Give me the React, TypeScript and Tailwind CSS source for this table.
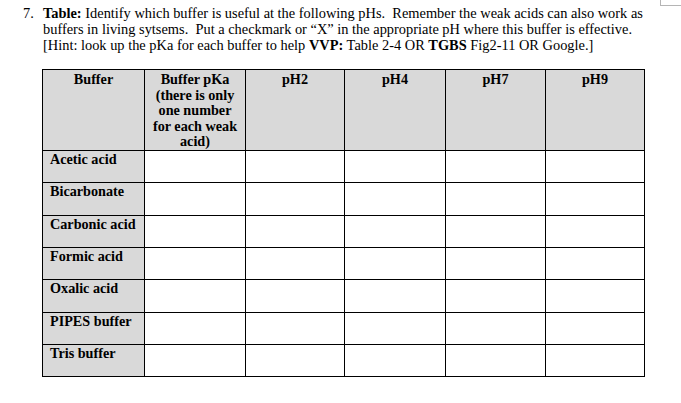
const buffers = [
  "Acetic acid",
  "Bicarbonate",
  "Carbonic acid",
  "Formic acid",
  "Oxalic acid",
  "PIPES buffer",
  "Tris buffer",
];

const rowHeights = ["h-[32px]", "h-[33px]", "h-[32px]", "h-[32px]", "h-[33px]", "h-[32px]", "h-[32px]"];

const phCols = ["pH2", "pH4", "pH7", "pH9"];

export default function App() {
  return (
    <div className="relative w-[681px] h-[403px] bg-white text-black font-['Liberation_Serif',serif] overflow-hidden">
      {/* page corner mark */}
      <div className="absolute left-[660px] top-0 w-[21px] h-[6px] border-l border-b border-[#b5b5b5]" />

      <div className="flex pt-[5px] text-[14.4px] leading-[16px]">
        <div className="w-[43px] pl-[23px] shrink-0">7.</div>
        <div className="w-[620px] whitespace-nowrap">
          <b>Table:</b> Identify which buffer is useful at the following pHs.&nbsp; Remember the weak acids can also work as
          <br />
          buffers in living sytsems.&nbsp; Put a checkmark or “X” in the appropriate pH where this buffer is effective.
          <br />
          [Hint: look up the pKa for each buffer to help <b>VVP:</b> Table 2-4 OR <b>TGBS</b> Fig2-11 OR Google.]
        </div>
      </div>

      <table className="ml-[42px] mt-[16px] table-fixed border-collapse text-[14.2px] leading-[15.5px] font-bold">
        <colgroup>
          <col className="w-[102px]" />
          <col className="w-[101px]" />
          <col className="w-[99px]" />
          <col className="w-[101px]" />
          <col className="w-[100px]" />
          <col className="w-[99px]" />
        </colgroup>
        <thead>
          <tr className="h-[80px] bg-[#d9d9d9]">
            <th className="border border-black align-top text-center pt-[2px]">Buffer</th>
            <th className="border border-black align-top text-center pt-[2px] whitespace-nowrap">
              Buffer pKa
              <br />
              (there is only
              <br />
              one number
              <br />
              for each weak
              <br />
              acid)
            </th>
            {phCols.map((p) => (
              <th key={p} className="border border-black align-top text-center pt-[2px]">
                {p}
              </th>
            ))}
          </tr>
        </thead>
        <tbody>
          {buffers.map((name, i) => (
            <tr key={name} className={rowHeights[i]}>
              <td className="border border-black bg-[#d9d9d9] align-top pl-[7px] pt-[1px] whitespace-nowrap">{name}</td>
              <td className="border border-black" />
              <td className="border border-black" />
              <td className="border border-black" />
              <td className="border border-black" />
              <td className="border border-black" />
            </tr>
          ))}
        </tbody>
      </table>
    </div>
  );
}
